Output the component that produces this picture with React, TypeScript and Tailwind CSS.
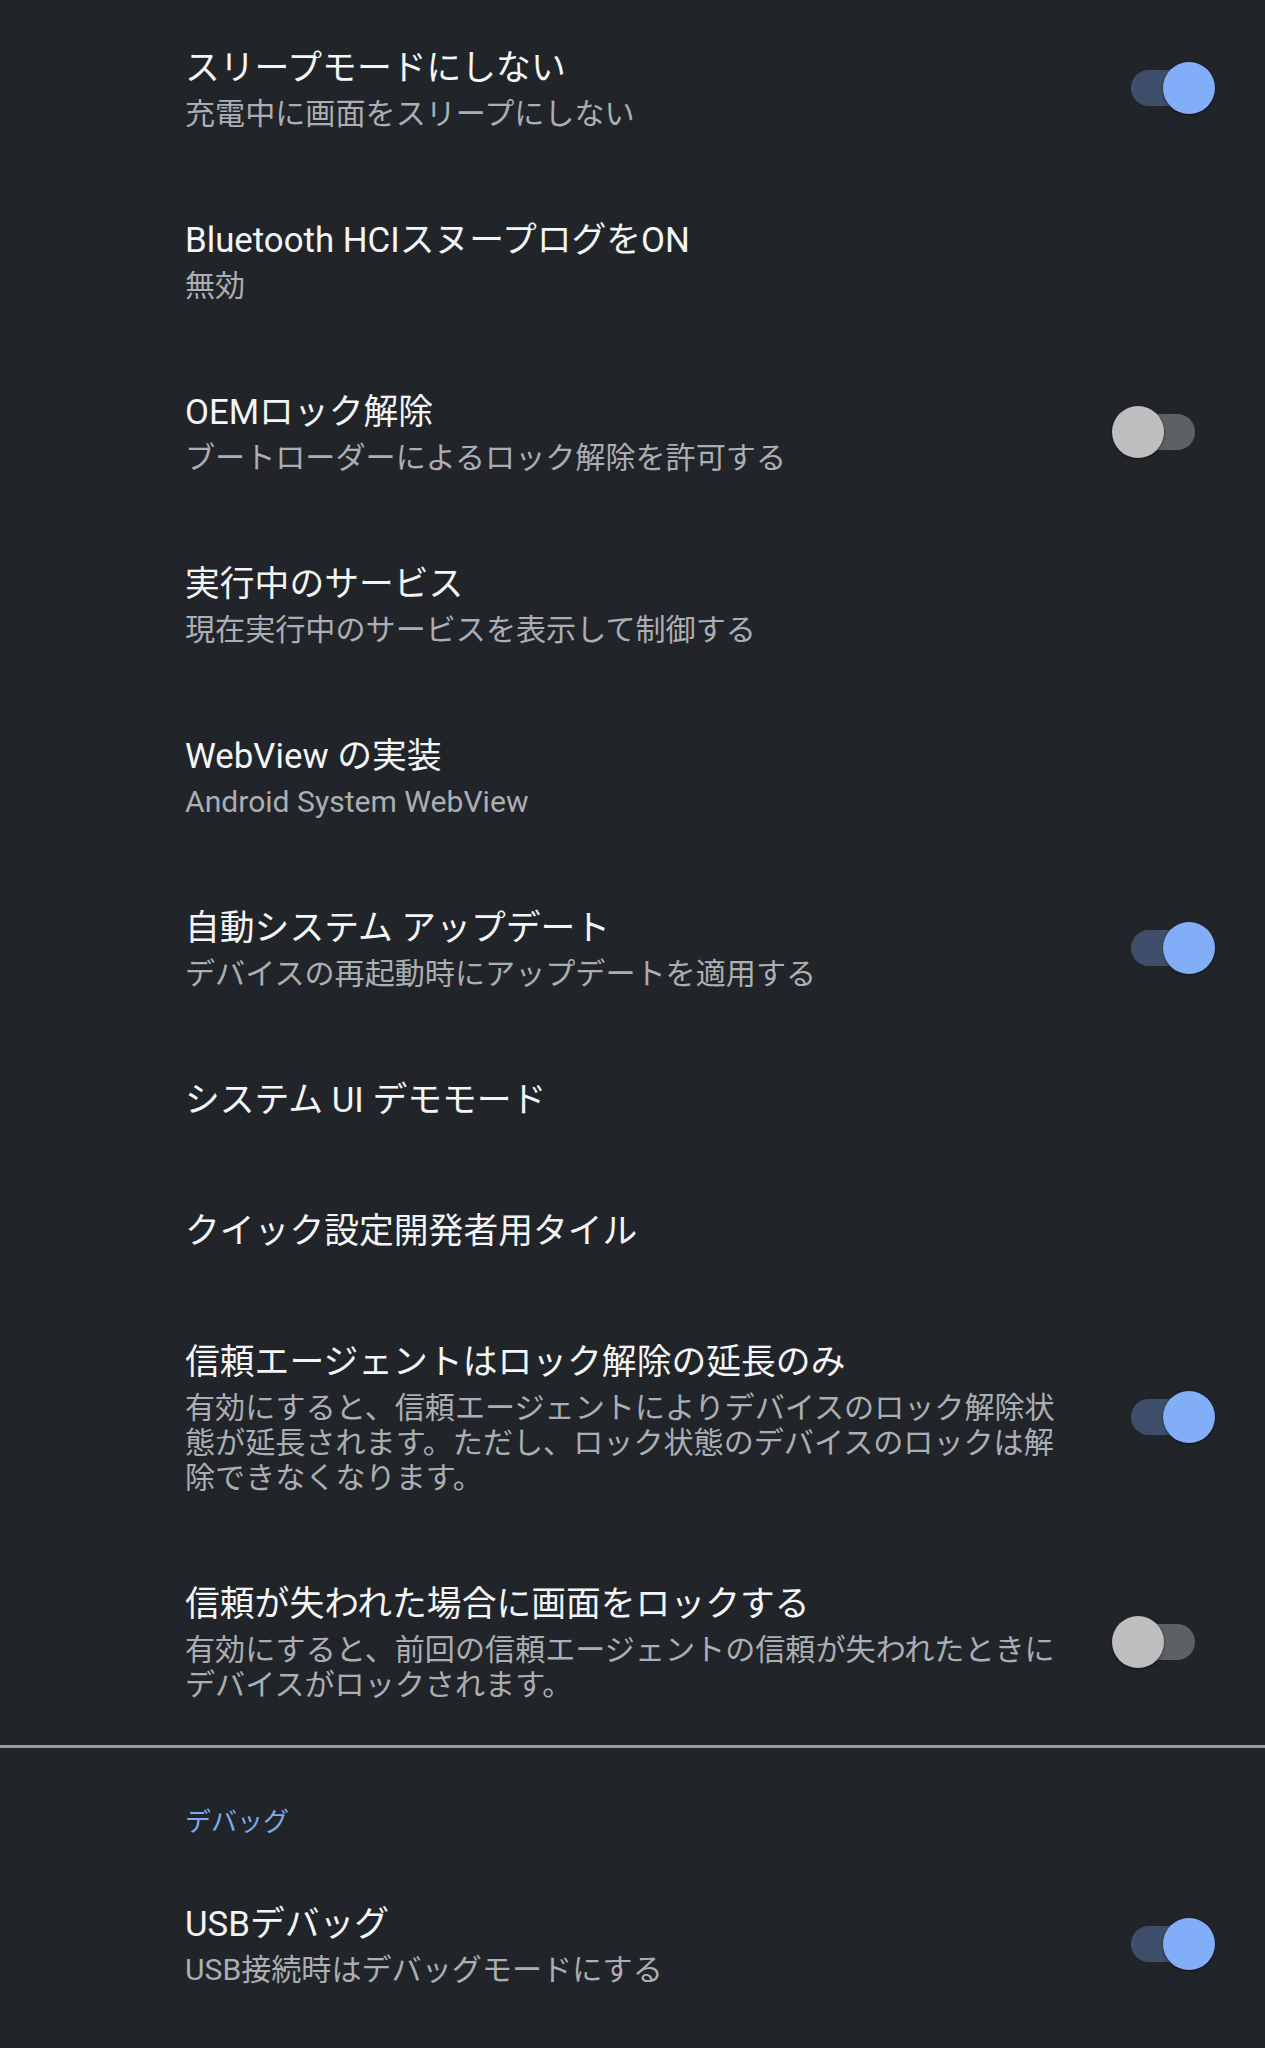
import React from "react";

type Item = {
  title: string;
  sub?: string;
  toggle?: "on" | "off";
};

const itemsTop: Item[] = [
  { title: "スリープモードにしない", sub: "充電中に画面をスリープにしない", toggle: "on" },
  { title: "Bluetooth HCIスヌープログをON", sub: "無効" },
  { title: "OEMロック解除", sub: "ブートローダーによるロック解除を許可する", toggle: "off" },
  { title: "実行中のサービス", sub: "現在実行中のサービスを表示して制御する" },
  { title: "WebView の実装", sub: "Android System WebView" },
  { title: "自動システム アップデート", sub: "デバイスの再起動時にアップデートを適用する", toggle: "on" },
  { title: "システム UI デモモード" },
  { title: "クイック設定開発者用タイル" },
  {
    title: "信頼エージェントはロック解除の延長のみ",
    sub: "有効にすると、信頼エージェントによりデバイスのロック解除状態が延長されます。ただし、ロック状態のデバイスのロックは解除できなくなります。",
    toggle: "on",
  },
  {
    title: "信頼が失われた場合に画面をロックする",
    sub: "有効にすると、前回の信頼エージェントの信頼が失われたときにデバイスがロックされます。",
    toggle: "off",
  },
];

function Toggle({ on }: { on: boolean }) {
  return (
    <div className="relative ml-[47px] h-[52px] w-[103px] shrink-0">
      <div
        className={
          on
            ? "absolute left-[19px] top-[8px] h-[36px] w-[64px] rounded-full bg-[#3f4f6b]"
            : "absolute left-[19px] top-[8px] h-[36px] w-[64px] rounded-full bg-[#5d6165]"
        }
      />
      <div
        className={
          on
            ? "absolute left-[51px] top-0 h-[52px] w-[52px] rounded-full bg-[#82aef8] shadow-[0_1px_3px_rgba(0,0,0,0.5)]"
            : "absolute left-0 top-0 h-[52px] w-[52px] rounded-full bg-[#bebebe] shadow-[0_1px_3px_rgba(0,0,0,0.5)]"
        }
      />
    </div>
  );
}

function Row({ item }: { item: Item }) {
  return (
    <div className="flex items-center py-[43.5px] pl-[185px]">
      <div className="w-[880px] shrink-0">
        <div className="text-[34.8px] leading-[44px] text-[#f4f5f6]">{item.title}</div>
        {item.sub && (
          <div className="mt-[6px] text-[30.1px] leading-[35px] text-[#abaeb2]">{item.sub}</div>
        )}
      </div>
      {item.toggle && <Toggle on={item.toggle === "on"} />}
    </div>
  );
}

export default function App() {
  return (
    <div
      className="min-h-[2048px] w-full bg-[#212529] pt-[2px]"
      style={{ fontFamily: "Roboto, 'Noto Sans CJK JP', sans-serif" }}
    >
      {itemsTop.map((it, i) => (
        <Row key={i} item={it} />
      ))}
      <div className="h-[3px] w-full bg-[#9a9ea3]" />
      <div className="pb-[21px] pl-[185px] pt-[59px] text-[26px] leading-[30px] text-[#7fa8ef]">
        デバッグ
      </div>
      <Row item={{ title: "USBデバッグ", sub: "USB接続時はデバッグモードにする", toggle: "on" }} />
    </div>
  );
}
